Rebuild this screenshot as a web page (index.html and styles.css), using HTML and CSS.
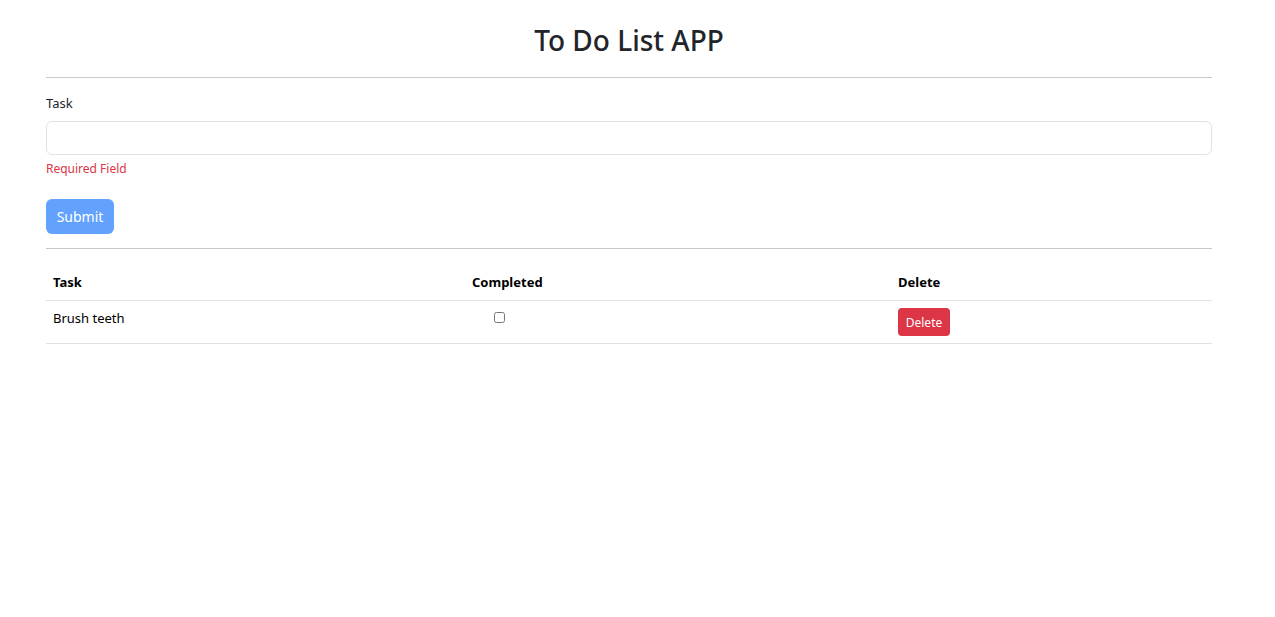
FILE: index.html
```html
<!DOCTYPE html>
<html lang="en">
<head>
  <meta charset="UTF-8">
  <meta name="viewport" content="width=device-width, initial-scale=1.0">
  <title>To Do List APP</title>
  <link rel="stylesheet" href="styles.css">
</head>
<body>
  <div class="container">
    <h1>To Do List APP</h1>
    <hr>

    <form class="task-form">
      <label for="task">Task</label>
      <input type="text" id="task" class="task-input">
      <div class="error">Required Field</div>
      <button type="submit" class="btn btn-submit" disabled>Submit</button>
    </form>

    <hr>

    <table class="task-table">
      <thead>
        <tr>
          <th class="col-task">Task</th>
          <th class="col-done">Completed</th>
          <th>Delete</th>
        </tr>
      </thead>
      <tbody>
        <tr>
          <td>Brush teeth</td>
          <td><input type="checkbox" class="done-check"></td>
          <td><button class="btn btn-delete">Delete</button></td>
        </tr>
      </tbody>
    </table>
  </div>
</body>
</html>
```

FILE: styles.css
```css
body {
  font-family: 'Noto Sans', 'Open Sans', sans-serif;
  font-size: 13px;
  color: #212529;
  background: #fff;
  margin: 0;
}
.container {
  width: 1166px;
  margin-left: 46px;
  padding-top: 22px;
}
h1 {
  text-align: center;
  font-size: 28px;
  font-weight: 500;
  line-height: 36px;
  margin: 0 0 19px;
}
hr {
  border: none;
  border-top: 1px solid #c8c8c8;
  margin: 0;
}
.task-form {
  padding-top: 15px;
  padding-bottom: 14px;
}
label {
  display: block;
  line-height: 21px;
  margin-bottom: 7px;
}
.task-input {
  display: block;
  box-sizing: border-box;
  width: 100%;
  height: 34px;
  border: 1px solid #dee2e6;
  border-radius: 6px;
  padding: 6px 12px;
  font-size: 14px;
  font-family: inherit;
}
.error {
  color: #dc3545;
  font-size: 12px;
  line-height: 19px;
  margin-top: 4px;
  margin-bottom: 21px;
}
.btn {
  font-family: inherit;
  color: #fff;
  border: none;
  cursor: pointer;
}
.btn-submit {
  display: block;
  width: 68px;
  height: 35px;
  font-size: 14px;
  background: #62a2fe;
  border-radius: 6px;
}
.task-table {
  width: 100%;
  border-collapse: collapse;
  margin-top: 16px;
}
.task-table th,
.task-table td {
  text-align: left;
  vertical-align: top;
  padding: 7px 7px;
  line-height: 21px;
  border-bottom: 1px solid #dee2e6;
  color: #000;
}
.task-table th {
  font-weight: 700;
}
.col-task {
  width: 405px;
}
.col-done {
  width: 412px;
}
.done-check {
  margin: 4px 0 0 22px;
  width: 11px;
  height: 11px;
}
.btn-delete {
  display: block;
  width: 52px;
  height: 28px;
  font-size: 12px;
  background: #dc3545;
  border-radius: 4px;
}
```
